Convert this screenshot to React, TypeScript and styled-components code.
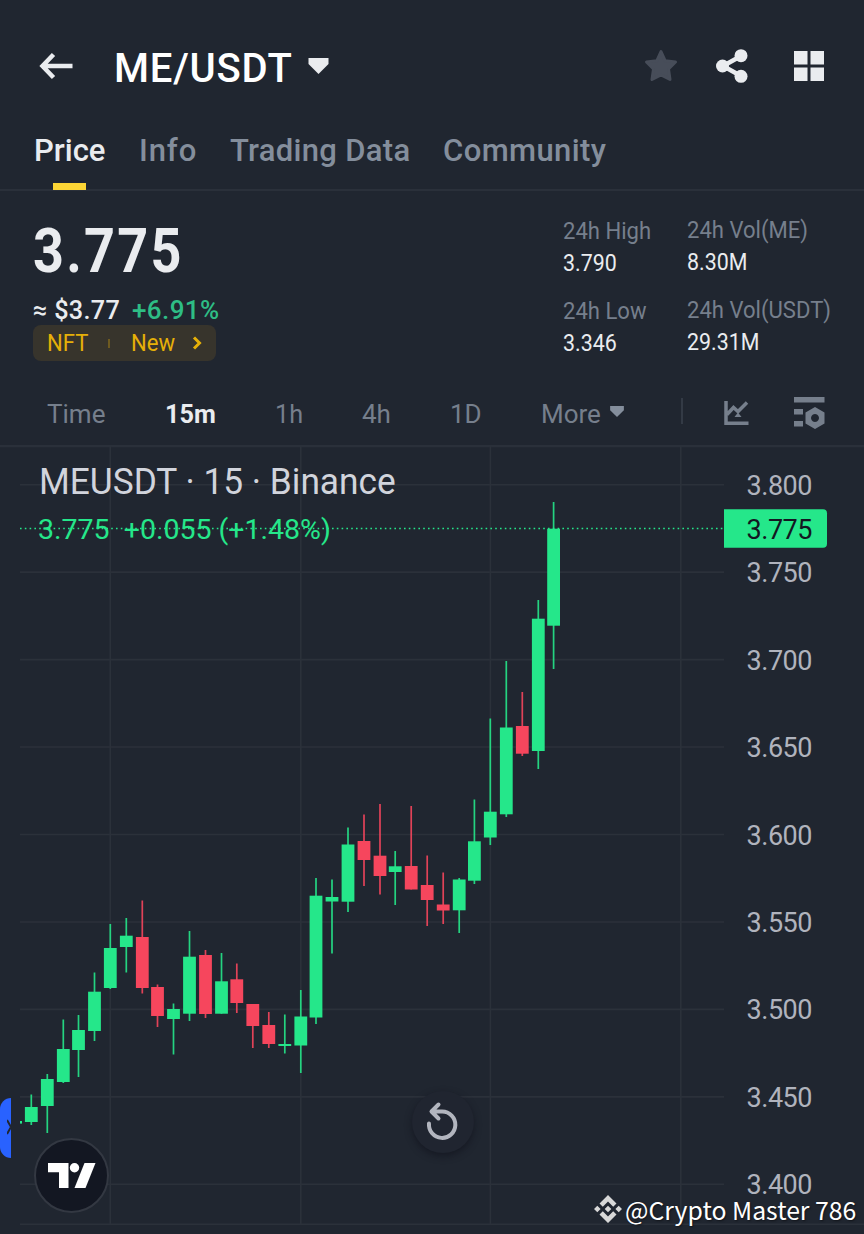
import React from 'react';
import styled, { createGlobalStyle } from 'styled-components';

const c = {
  bg: '#202630',
  line: '#2a303a',
  text: '#eaecef',
  muted: '#848e9c',
  dim: '#767f8c',
  green: '#2ebd85',
  candleUp: '#25e78a',
  candleDown: '#f6465d',
  gold: '#e6b008',
  yellow: '#fcd535',
};

const Global = createGlobalStyle`
  * { box-sizing: border-box; }
  body { margin: 0; background: ${c.bg}; font-family: Roboto, 'Liberation Sans', sans-serif; }
`;

type TProps = { $size: number; $ls?: number; $weight?: number; $color?: string; $sx?: number };

const T = styled.span<TProps>`
  display: inline-block;
  white-space: pre;
  font-size: ${p => p.$size}px;
  line-height: 1.2;
  font-weight: ${p => p.$weight ?? 400};
  letter-spacing: ${p => p.$ls ?? 0}px;
  color: ${p => p.$color ?? c.text};
  transform: scaleX(${p => p.$sx ?? 1});
  transform-origin: left center;
`;

const Screen = styled.main`
  width: 864px;
  height: 1234px;
  overflow: hidden;
  background: ${c.bg};
`;

const Header = styled.header`
  display: flex;
  align-items: center;
  height: 132px;
  padding: 0 36px 0 38px;
`;

const Title = styled.h1`
  display: flex;
  align-items: center;
  margin: 0 auto 0 40px;
  width: 215px;
  justify-content: space-between;
`;

const TitleText = styled(T)`
  margin-top: 5px;
`;

const Actions = styled.div`
  display: flex;
  align-items: center;
  gap: 37px;
  svg { display: block; }
`;

const Tabs = styled.nav`
  display: flex;
  height: 59px;
  padding-left: 34px;
  border-bottom: 2px solid ${c.line};
`;

const Tab = styled.div<{ $w: number; $active?: boolean }>`
  width: ${p => p.$w}px;
  flex: none;
  position: relative;
  &::after {
    content: '';
    display: ${p => (p.$active ? 'block' : 'none')};
    position: absolute;
    left: 19px;
    bottom: -1px;
    width: 33px;
    height: 7px;
    background: ${c.yellow};
  }
`;

const Summary = styled.section`
  display: flex;
  height: 190px;
  padding: 20px 0 0 33px;
`;

const PriceBlock = styled.div`
  width: 530px;
  display: flex;
  flex-direction: column;
  align-items: flex-start;
  padding-top: 3px;
`;

const ChangeRow = styled.div`
  display: flex;
  height: 30px;
  margin-top: 7px;
`;

const Tag = styled.div`
  display: flex;
  align-items: center;
  width: 183px;
  height: 36px;
  padding-left: 14px;
  border-radius: 8px;
  background: #37342c;
`;

const TagLabel = styled(T)<{ $w: number }>`
  width: ${p => p.$w}px;
`;

const TagDivider = styled.i`
  width: 2px;
  height: 9px;
  margin: 0 21px 0 0;
  background: #6e5a20;
`;

const Usd = styled(T)`
  width: 99px;
`;

const Stats = styled.div`
  display: flex;
`;

const StatColumn = styled.div<{ $w: number; $top: number }>`
  width: ${p => p.$w}px;
  padding-top: ${p => p.$top}px;
  display: flex;
  flex-direction: column;
  gap: 16px;
`;

const Stat = styled.div`
  display: flex;
  flex-direction: column;
  align-items: flex-start;
  height: 64px;
  gap: 4px;
`;

const Intervals = styled.div`
  display: flex;
  align-items: center;
  height: 64px;
  padding-left: 47px;
`;

const Interval = styled.div<{ $w: number }>`
  flex: none;
  width: ${p => p.$w}px;
  display: flex;
  align-items: center;
  gap: 9px;
  padding-top: 3px;
  > svg { margin-top: -6px; }
`;

const Separator = styled.i`
  width: 2px;
  height: 26px;
  margin: -4px 41px 0 0;
  background: #333a45;
`;

const Tools = styled.div`
  display: flex;
  align-items: center;
  gap: 45px;
`;

const ChartArea = styled.section`
  position: relative;
  height: 789px;
  > svg { display: block; }
`;

const Legend = styled.div`
  position: absolute;
  left: 38px;
  top: 16px;
  display: flex;
  flex-direction: column;
  align-items: flex-start;
  gap: 9px;
`;

const LegendTitle = styled(T)`
  margin-left: 1px;
`;

const SideHandle = styled.div`
  position: absolute;
  left: 0;
  top: 653px;
  width: 11px;
  height: 60px;
  border-radius: 11px 0 0 11px;
  background: #2962ff;
  svg { display: block; margin: 21px 0 0 7px; }
`;

const LogoBadge = styled.div`
  position: absolute;
  left: 34px;
  top: 693px;
  width: 75px;
  height: 75px;
  border-radius: 50%;
  border: 2px solid #333842;
  background: #131722;
  display: flex;
  align-items: center;
  justify-content: center;
`;

const ResetButton = styled.div`
  position: absolute;
  left: 412px;
  top: 646px;
  width: 62px;
  height: 62px;
  border-radius: 50%;
  background: #202530;
  box-shadow: 0 3px 7px rgba(15, 17, 26, 0.6);
  svg { display: block; margin: 10px 0 0 12px; }
`;

const Watermark = styled.div`
  position: absolute;
  left: 594px;
  top: 751px;
  height: 26px;
  display: flex;
  align-items: center;
  gap: 3px;
  color: #fff;
  font: 400 24.8px/26px 'Noto Sans CJK SC', sans-serif;
  white-space: pre;
  text-shadow: 1px 1px 2px rgba(0, 0, 0, 0.5);
`;

type Candle = [x: number, high: number, top: number, bottom: number, low: number, down?: 1];

const candles: Candle[] = [
  [31.3, 1094.5, 1107, 1122, 1125],
  [47.3, 1074, 1079, 1106, 1133],
  [63.3, 1019.5, 1049, 1082, 1083],
  [78.5, 1015, 1030, 1050, 1077],
  [94.5, 972.5, 991.7, 1031, 1041],
  [110.3, 924, 948, 988, 989],
  [126.3, 918, 935.7, 947, 972.5],
  [142.3, 900.5, 937, 988, 993.5, 1],
  [157.5, 984.5, 987, 1016, 1027, 1],
  [173.5, 1003.5, 1009, 1019, 1054.5],
  [189.5, 931, 956.7, 1013.7, 1021],
  [205.5, 950, 955, 1014, 1018, 1],
  [221.5, 953, 981.3, 1013.7, 1013.7],
  [236.8, 963.5, 979.3, 1003, 1013, 1],
  [252.8, 1004, 1004, 1026, 1048, 1],
  [268.8, 1012, 1025, 1044, 1048, 1],
  [284.8, 1014.5, 1044, 1046, 1053.5],
  [300.8, 990, 1016.5, 1045.5, 1073],
  [316, 878, 895.7, 1017.5, 1024],
  [332, 879.5, 897, 901.5, 953.5],
  [348, 827.5, 844.5, 901.7, 912],
  [364, 814.5, 841, 860, 886, 1],
  [380, 804, 855.7, 876, 894.5, 1],
  [395.2, 851, 866.3, 872, 905],
  [411.2, 806, 866, 889.5, 889.5, 1],
  [427.2, 855.5, 885, 900, 926, 1],
  [443.2, 872.5, 904.5, 910.5, 924, 1],
  [459.2, 878, 879.5, 910.3, 933],
  [474.4, 799.5, 841.3, 880.7, 884],
  [490.3, 718.5, 811.7, 837.5, 845],
  [506.3, 661, 727.5, 814.3, 817],
  [522.3, 692, 726, 753.7, 756, 1],
  [538.3, 600, 618.7, 751, 769],
  [553.6, 502, 528.7, 625.7, 669],
];

const rows = [0, 1, 2, 3, 4, 5, 6, 7, 8].map(i => ({
  y: 484.7 + i * 87.45,
  label: (3.8 - i * 0.05).toFixed(3),
}));
const columns = [110.3, 300.8, 490.4, 680.8];

const Caret = ({ w, h, color }: { w: number; h: number; color: string }) => (
  <svg width={w} height={h} viewBox="0 0 20 16">
    <path d="M0 0H20V6L10 16L0 6Z" fill={color} />
  </svg>
);

const CandleChart = () => (
  <svg width="864" height="789" viewBox="0 445 864 789">
    <g stroke="#2b313a" strokeWidth="1.6">
      <path d="M0 446.2H864" strokeWidth="2.2" stroke={c.line} />
      {rows.map(r => (
        <path key={r.y} d={`M20 ${r.y}H724`} />
      ))}
      {columns.map(x => (
        <path key={x} d={`M${x} 446V1224`} />
      ))}
      <path d="M20 1224.3H864" />
    </g>
    <rect x="20" y="1121" width="2" height="2.6" fill={c.candleUp} />
    {candles.map(([x, high, top, bottom, low, down]) => {
      const fill = down ? c.candleDown : c.candleUp;
      return (
        <g key={x} fill={fill}>
          <rect x={x - 0.85} y={high} width="1.7" height={low - high} opacity="0.9" />
          <rect x={x - 6.4} y={top} width="12.8" height={bottom - top} />
        </g>
      );
    })}
    <path d="M20 528.5H724" stroke={c.candleUp} strokeWidth="1.6" strokeDasharray="1.6 3.2" />
    <g fontFamily="Roboto" fontSize="27" fill="#b0b3bd">
      {rows.map(r => (
        <text key={r.label} x="746.5" y={r.y + 10} textLength="66">
          {r.label}
        </text>
      ))}
      <path d="M724 509.3H823a4 4 0 0 1 4 4V543.7a4 4 0 0 1 -4 4H724Z" fill={c.candleUp} />
      <text x="746.5" y="538.6" textLength="66" fill="#131722">
        3.775
      </text>
    </g>
  </svg>
);

const StatItem = ({ label, value }: { label: string; value: string }) => (
  <Stat>
    <T $size={23} $sx={0.96} $color={c.dim}>{label}</T>
    <T $size={23} $sx={0.93}>{value}</T>
  </Stat>
);

export default function App() {
  return (
    <Screen>
      <Global />
      <Header>
        <svg width="36" height="28" viewBox="0 0 36 28" fill="none" stroke={c.text} strokeWidth="4.5">
          <path d="M5 14H34.500M15.500 2.500L4.500 14L15.500 25.500" />
        </svg>
        <Title>
          <TitleText $size={40} $weight={500} $ls={0.8} $color="#fff">ME/USDT</TitleText>
          <Caret w={21} h={16} color={c.text} />
        </Title>
        <Actions>
          <svg width="34" height="34" viewBox="0 0 34 34">
            <path
              d="M17 2.500L21.200 11.800L31.500 13L24.500 20L26 30.500L17 26L8 30.500L9.500 20L2.500 13L12.800 11.800Z"
              fill="#474d59" stroke="#474d59" strokeWidth="3" strokeLinejoin="round"
            />
          </svg>
          <svg width="34" height="34" viewBox="0 0 34 34" fill={c.text}>
            <path d="M26 7L8 17L26 27" fill="none" stroke={c.text} strokeWidth="4.5" />
            <circle cx="26" cy="6.7" r="6.5" />
            <circle cx="7.5" cy="17" r="6.5" />
            <circle cx="26" cy="27.3" r="6.5" />
          </svg>
          <svg width="42" height="34" viewBox="0 0 42 34" fill={c.text}>
            <path d="M8 2H21.500V15.500H8ZM24.500 2H38V15.500H24.500ZM8 18.500H21.500V32H8ZM24.500 18.500H38V32H24.500Z" />
          </svg>
        </Actions>
      </Header>

      <Tabs>
        <Tab $w={105} $active><T $size={31} $weight={500}>Price</T></Tab>
        <Tab $w={91}><T $size={31} $ls={0.9} $color={c.muted} $weight={500}>Info</T></Tab>
        <Tab $w={213}><T $size={31} $ls={0.3} $color={c.muted} $weight={500}>Trading Data</T></Tab>
        <Tab $w={200}><T $size={31} $ls={0.4} $color={c.muted} $weight={500}>Community</T></Tab>
      </Tabs>

      <Summary>
        <PriceBlock>
          <T $size={62} $weight={700} $ls={2.6} $sx={0.87}>3.775</T>
          <ChangeRow>
            <Usd $size={26} $weight={500} $ls={0.3} $sx={0.97}>≈ $3.77</Usd>
            <T $size={26} $weight={500} $ls={0.4} $color={c.green}>+6.91%</T>
          </ChangeRow>
          <Tag>
            <TagLabel $w={61} $size={23} $sx={0.96} $color={c.gold}>NFT</TagLabel>
            <TagDivider />
            <TagLabel $w={61} $size={23} $sx={0.96} $color={c.gold}>New</TagLabel>
            <svg width="10" height="14" viewBox="0 0 10 14">
              <path d="M2 1.500L7.500 7L2 12.500" fill="none" stroke={c.gold} strokeWidth="3" />
            </svg>
          </Tag>
        </PriceBlock>
        <Stats>
          <StatColumn $w={124} $top={7}>
            <StatItem label="24h High" value="3.790" />
            <StatItem label="24h Low" value="3.346" />
          </StatColumn>
          <StatColumn $w={170} $top={6}>
            <StatItem label="24h Vol(ME)" value="8.30M" />
            <StatItem label="24h Vol(USDT)" value="29.31M" />
          </StatColumn>
        </Stats>
      </Summary>

      <Intervals>
        <Interval $w={118}><T $size={26} $color={c.dim}>Time</T></Interval>
        <Interval $w={110}><T $size={26} $weight={700} $sx={0.97}>15m</T></Interval>
        <Interval $w={87}><T $size={26} $color={c.dim} $sx={0.97}>1h</T></Interval>
        <Interval $w={88}><T $size={26} $color={c.dim}>4h</T></Interval>
        <Interval $w={91}><T $size={26} $color={c.dim}>1D</T></Interval>
        <Interval $w={140}>
          <T $size={26} $color={c.dim}>More</T>
          <Caret w={14} h={11} color={c.muted} />
        </Interval>
        <Separator />
        <Tools>
          <svg width="25" height="26" viewBox="0 0 25 26" fill="none" stroke={c.dim} strokeWidth="3.5">
            <path d="M2 1V23.300H24.500M3 14.500L9.500 7.500L14 11.500L23 2.500" />
            <path d="M14 12.500L17.500 17H10.500Z" fill={c.dim} stroke="none" />
          </svg>
          <svg width="31" height="33" viewBox="0 0 31 33" fill={c.dim}>
            <path d="M0 0H30.500V5.500H0ZM0 12H9V17.500H0ZM0 24H9V29.500H0Z" />
            <path fillRule="evenodd" d="M21 10L30.500 15.500V26.500L21 32L11.500 26.500V15.500ZM21 17a4 4 0 1 0 .01 0Z" />
          </svg>
        </Tools>
      </Intervals>

      <ChartArea>
        <CandleChart />
        <Legend>
          <LegendTitle $size={36} $sx={0.98} $color="#d1d4dc">MEUSDT · 15 · Binance</LegendTitle>
          <T $size={28.5} $color={c.candleUp}>3.775  +0.055 (+1.48%)</T>
        </Legend>
        <SideHandle>
          <svg width="4" height="16" viewBox="0 0 4 16" fill="none" stroke="#202630" strokeWidth="2">
            <path d="M0 1L4 8L0 15" />
          </svg>
        </SideHandle>
        <LogoBadge>
          <svg width="48" height="26" viewBox="0 0 48 26" fill="#fff">
            <path d="M0 0H20.500V25H11V9.300H0Z" />
            <circle cx="26.5" cy="4.7" r="4.7" />
            <path d="M36.500 0H47.500L37.500 25H26.500Z" />
          </svg>
        </LogoBadge>
        <ResetButton>
          <svg width="36" height="42" viewBox="0 0 36 42" fill="none" stroke="#b2b5be" strokeWidth="4" strokeLinecap="round" strokeLinejoin="round">
            <path d="M5 22.500A13.200 13.200 0 1 0 18.200 10.500H8M14.500 3.500L7.500 10.500L14.500 17.500" />
          </svg>
        </ResetButton>
        <Watermark>
          <svg width="28" height="28" viewBox="0 0 28 28" fill="#d8d8d8">
            <path d="M14 0L22.500 8.500L19.200 11.800L14 6.600L8.800 11.800L5.500 8.500ZM14 28L22.500 19.500L19.200 16.200L14 21.400L8.800 16.200L5.500 19.500ZM3.300 10.700L6.600 14L3.300 17.300L0 14ZM24.700 10.700L28 14L24.700 17.300L21.400 14ZM14 10.700L17.300 14L14 17.300L10.700 14Z" />
          </svg>
          @Crypto Master 786
        </Watermark>
      </ChartArea>
    </Screen>
  );
}
